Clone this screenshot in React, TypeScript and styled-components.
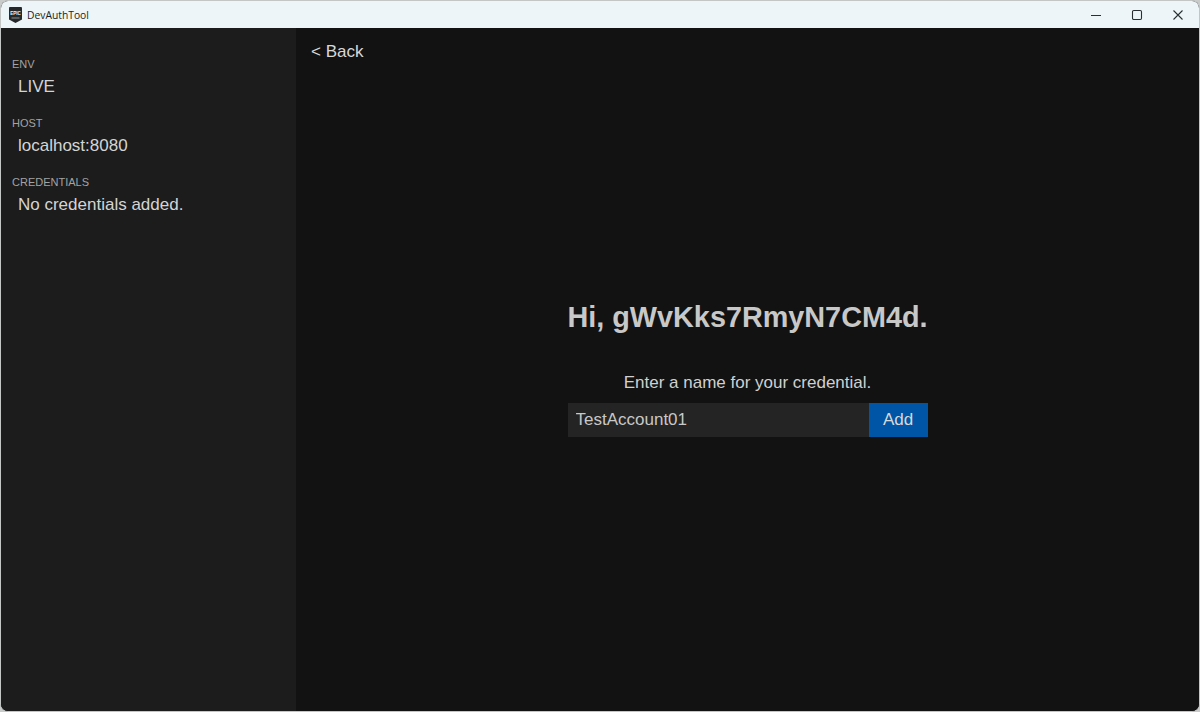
import React from 'react';
import styled, { createGlobalStyle } from 'styled-components';

const GlobalStyle = createGlobalStyle`
	html, body {
		margin: 0;
		padding: 0;
		width: 1200px;
		height: 712px;
		overflow: hidden;
		background: #c9cbcb;
		font-family: "Liberation Sans", Arial, sans-serif;
	}
`;

export default function App() {
	return (
		<>
			<GlobalStyle />
			<Window>
				<TitleBar>
					<TitleLeft>
						<EpicLogo />
						<TitleText>DevAuthTool</TitleText>
					</TitleLeft>
					<Controls>
						<ControlButton>
							<svg width="12" height="12" viewBox="0 0 12 12"><path d="M1 6.5h10" stroke="#2a2f33" strokeWidth="1.1" fill="none" /></svg>
						</ControlButton>
						<ControlButton>
							<svg width="12" height="12" viewBox="0 0 12 12"><rect x="1.5" y="1.5" width="9" height="9" rx="1.2" stroke="#2a2f33" strokeWidth="1.1" fill="none" /></svg>
						</ControlButton>
						<ControlButton>
							<svg width="12" height="12" viewBox="0 0 12 12"><path d="M1.5 1.5l9 9M10.5 1.5l-9 9" stroke="#2a2f33" strokeWidth="1.1" fill="none" /></svg>
						</ControlButton>
					</Controls>
				</TitleBar>
				<Body>
					<Sidebar>
						<Section>
							<SectionLabel>ENV</SectionLabel>
							<SectionValue>LIVE</SectionValue>
						</Section>
						<Section>
							<SectionLabel>HOST</SectionLabel>
							<SectionValue>localhost:8080</SectionValue>
						</Section>
						<Section>
							<SectionLabel>CREDENTIALS</SectionLabel>
							<SectionValue>No credentials added.</SectionValue>
						</Section>
					</Sidebar>
					<Main>
						<BackLink>&lt; Back</BackLink>
						<Center>
							<Form>
								<Greeting>Hi, gWvKks7RmyN7CM4d.</Greeting>
								<Prompt>Enter a name for your credential.</Prompt>
								<InputRow>
									<NameInput defaultValue="TestAccount01" />
									<AddButton>Add</AddButton>
								</InputRow>
							</Form>
						</Center>
					</Main>
				</Body>
			</Window>
		</>
	);
}

function EpicLogo() {
	return (
		<svg width="13" height="16" viewBox="0 0 13 16">
			<path d="M1.2 0h10.6c.7 0 1.2.5 1.2 1.2V12.4L6.5 16 0 12.4V1.2C0 .5.5 0 1.2 0z" fill="#26282a" />
			<text x="6.5" y="8.4" textAnchor="middle" fontSize="4.6" fontWeight="700" fill="#eef1f3" fontFamily="Liberation Sans, sans-serif">EPIC</text>
			<path d="M2.5 11h8" stroke="#a9acaf" strokeWidth="0.8" />
		</svg>
	);
}

const Window = styled.div`
	width: 1200px;
	height: 712px;
	box-sizing: border-box;
	display: flex;
	flex-direction: column;
	overflow: hidden;
	border: 1px solid #c4c6c6;
	border-radius: 8px;
	background: #121212;
`;

const TitleBar = styled.div`
	flex: 0 0 27px;
	display: flex;
	align-items: center;
	justify-content: space-between;
	background: #eef5f8;
`;

const TitleLeft = styled.div`
	display: flex;
	align-items: center;
	gap: 5px;
	padding-left: 8px;
`;

const TitleText = styled.div`
	font-family: "Open Sans", "Liberation Sans", sans-serif;
	font-size: 10.3px;
	color: #1c1c1c;
`;

const Controls = styled.div`
	display: flex;
	height: 100%;
	padding-right: 1px;
`;

const ControlButton = styled.div`
	width: 41px;
	display: flex;
	align-items: center;
	justify-content: center;
`;

const Body = styled.div`
	flex: 1;
	display: flex;
	min-height: 0;
`;

const Sidebar = styled.div`
	flex: 0 0 295px;
	box-sizing: border-box;
	padding-top: 30px;
	background: #1c1c1c;
	display: flex;
	flex-direction: column;
	gap: 18px;
`;

const Section = styled.div`
	display: flex;
	flex-direction: column;
	gap: 4px;
	padding-left: 11px;
`;

const SectionLabel = styled.div`
	font-size: 11px;
	line-height: 13px;
	color: #a3a3a3;
`;

const SectionValue = styled.div`
	padding-left: 6px;
	font-size: 17px;
	line-height: 24px;
	color: #d4d4d4;
`;

const Main = styled.div`
	flex: 1;
	display: flex;
	flex-direction: column;
	background: #121212;
`;

const BackLink = styled.div`
	padding: 14px 0 0 15px;
	font-size: 17px;
	line-height: 20px;
	color: #d8d8d8;
`;

const Center = styled.div`
	flex: 1;
	display: flex;
	justify-content: center;
	align-items: flex-start;
	padding-top: 237px;
`;

const Form = styled.div`
	width: 360px;
	display: flex;
	flex-direction: column;
	align-items: center;
`;

const Greeting = styled.div`
	font-size: 28.8px;
	line-height: 36px;
	font-weight: 700;
	color: #c8c8c8;
	white-space: nowrap;
`;

const Prompt = styled.div`
	margin-top: 38px;
	font-size: 17px;
	line-height: 20px;
	color: #d0d0d0;
`;

const InputRow = styled.div`
	margin-top: 10px;
	width: 100%;
	height: 34px;
	display: flex;
`;

const NameInput = styled.input`
	flex: 1;
	min-width: 0;
	box-sizing: border-box;
	padding: 0 8px;
	border: none;
	outline: none;
	background: #242424;
	color: #c8c8c8;
	font-family: inherit;
	font-size: 17px;
`;

const AddButton = styled.button`
	flex: 0 0 59px;
	padding: 0;
	border: none;
	background: #0055a6;
	color: #d8d8d8;
	font-family: inherit;
	font-size: 17px;
`;
